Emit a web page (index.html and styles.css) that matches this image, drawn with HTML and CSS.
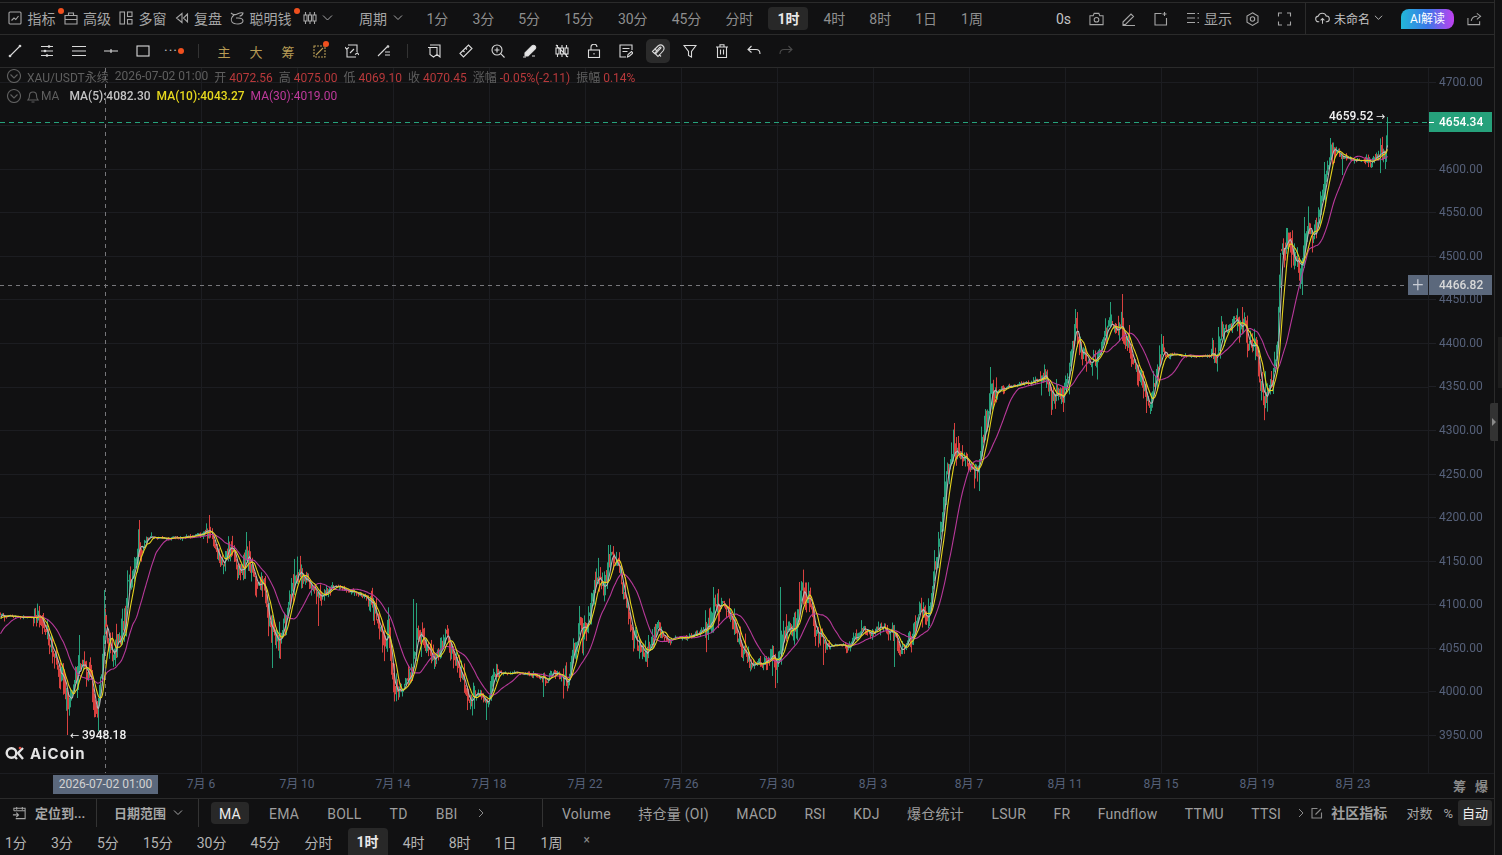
FILE: index.html
```html
<!DOCTYPE html>
<html lang="zh-CN">
<head>
    <meta charset="UTF-8">
    <meta name="viewport" content="width=device-width, initial-scale=1.0">
    <title>XAU/USDT永续 - AiCoin</title>
    <link rel="stylesheet" href="styles.css">
</head>
<body>
<div class="app">
    <header class="topbar">
        <div class="tool"><svg class="ic" viewBox="0 0 14 14"><rect x="1" y="1" width="12" height="12" rx="1"/><path d="M3.500 9.500 6 7l1.800 1.500L10.500 5"/></svg>指标<i class="dot dot-a"></i></div>
        <div class="tool"><svg class="ic" viewBox="0 0 14 14"><path d="M1 4.500h12v8.500H1zM1 8.500h12M4.500 4.500V2h5v2.500"/></svg>高级</div>
        <div class="tool"><svg class="ic" viewBox="0 0 14 14"><rect x="1" y="1" width="4.500" height="12"/><rect x="8.500" y="1" width="4.500" height="4.500"/><rect x="8.500" y="8.500" width="4.500" height="4.500"/></svg>多窗</div>
        <div class="tool"><svg class="ic" viewBox="0 0 14 14"><path d="M7 2.500 1.500 7 7 11.500zM12.500 3 8.500 7l4 4z"/></svg>复盘</div>
        <div class="tool tool-wide"><svg class="ic" viewBox="0 0 14 14"><path d="M1 2c1.500 1.500 3 2 5 1.500S10 1 13 2c-.5 2-2 3-3.500 3M4 4C1.500 6 .5 9 2 11s4 2 6 2 5-1 5-3-2.500-3-5-3H6"/></svg>聪明钱<i class="dot dot-b"></i></div>
        <div class="tool tool-candle"><svg class="ic" viewBox="0 0 14 14"><path d="M2.500 1v3M2.500 10v3M7 1v3M7 10v3M11.500 1v3M11.500 10v3"/><rect x="1" y="4" width="3" height="6"/><rect x="5.500" y="4" width="3" height="6"/><rect x="10" y="4" width="3" height="6"/></svg><svg class="chev chev-wide" viewBox="0 0 10 6"><path d="M.5.500 5 5 9.500.500"/></svg></div>
        <div class="tool tool-cycle">周期<svg class="chev" viewBox="0 0 10 6"><path d="M1 .5 5 4.500 9 .5"/></svg></div>
        <nav class="periods">
            <a>1分</a><a>3分</a><a>5分</a><a>15分</a><a>30分</a><a>45分</a><a>分时</a><a class="on">1时</a><a>4时</a><a>8时</a><a>1日</a><a>1周</a>
        </nav>
        <div class="top-right">
            <span class="countdown">0s</span>
            <svg class="ic ic-right" viewBox="0 0 16 14"><path d="M1 3.500h3.500l1-2.500h5l1 2.500H15V13H1z"/><circle cx="8" cy="7.800" r="2.500"/></svg>
            <svg class="ic ic-right" viewBox="0 0 14 14"><path d="M1.500 10 9.500 2l2.500 2.500-8 8H1.500zM1 13.500h12.500"/></svg>
            <svg class="ic ic-right" viewBox="0 0 14 14"><path d="M8 1.500H1.500V13H13V6M11 0v4M9 2h4"/></svg>
            <div class="tool tool-show"><svg class="ic" viewBox="0 0 14 14"><path d="M1 2.500h8M1 7h8M1 11.500h8M11.500 2.500h1.500M11.500 7h1.500M11.500 11.500h1.500"/></svg>显示</div>
            <svg class="ic ic-right" viewBox="0 0 14 14"><path d="M7 .8 12.500 4v6.200L7 13.400 1.500 10.200V4z"/><circle cx="7" cy="7" r="2.200"/></svg>
            <svg class="ic ic-right ic-full" viewBox="0 0 14 14"><path d="M1 4.500V1h3.500M9.500 1H13v3.500M13 9.500V13H9.500M4.500 13H1V9.500"/></svg>
            <i class="vline"></i>
            <div class="tool tool-name"><svg class="ic" viewBox="0 0 16 14"><path d="M4.500 11H4A3 3 0 0 1 3.500 5 4.500 4.500 0 0 1 12 5a3 3 0 0 1 .500 6H11.500M8 13V7.500M6 9.500l2-2 2 2"/></svg>未命名<svg class="chev" viewBox="0 0 10 6"><path d="M1 .5 5 4.500 9 .5"/></svg></div>
            <span class="ai-btn">AI解读</span>
            <svg class="ic ic-share" viewBox="0 0 16 14"><path d="M1 6v7h12.500V9.500M4.500 9c.5-3.500 3.500-5 6.500-5M10.500 1 14.500 4l-4 3.500"/></svg>
        </div>
    </header>

    <section class="toolbar">
        <span class="btn"><svg class="ic" viewBox="0 0 14 14"><path d="M2 12 12 2"/><circle cx="2" cy="12" r=".8"/><circle cx="12" cy="2" r=".8"/></svg></span>
        <span class="btn"><svg class="ic" viewBox="0 0 14 14"><path d="M1 2.500h12M1 7h12M1 11.500h12"/><circle cx="9" cy="2.500" r=".8"/><circle cx="5" cy="7" r=".8"/><circle cx="7" cy="11.500" r=".8"/></svg></span>
        <span class="btn"><svg class="ic" viewBox="0 0 14 14"><path d="M0 2.500h14M0 7h14M0 11.500h14"/></svg></span>
        <span class="btn"><svg class="ic" viewBox="0 0 14 14"><path d="M0 7h14M7 5v4"/></svg></span>
        <span class="btn"><svg class="ic" viewBox="0 0 14 14"><rect x="1" y="2" width="12" height="10"/></svg></span>
        <span class="btn more">···<i class="dot dot-more"></i></span>
        <i class="sep"></i>
        <span class="btn gold">主</span>
        <span class="btn gold">大</span>
        <span class="btn gold">筹</span>
        <span class="btn"><svg class="ic ic-gold" viewBox="0 0 14 14"><rect x="1" y="2" width="11" height="11" stroke-dasharray="2 1"/><path d="M3 11 10 4"/></svg><i class="dot dot-tool"></i></span>
        <span class="btn"><svg class="ic" viewBox="0 0 14 14"><path d="M3 1h9v7M11 13H2V5M4 3.500 1.500 5 0 3M10 10.500 12.500 9 14 11M5 9l4-4"/></svg></span>
        <span class="btn"><svg class="ic" viewBox="0 0 14 14"><path d="M1 12 10 3M8 8h5M8 11h5"/><circle cx="11" cy="2.500" r=".8"/></svg></span>
        <i class="sep sep-b"></i>
        <span class="btn"><svg class="ic" viewBox="0 0 14 14"><path d="M3 1h10v12l-3-2.500V3.500H1M3 3.500H10v7L6.500 13 3 10.500z"/></svg></span>
        <span class="btn"><svg class="ic" viewBox="0 0 14 14"><path d="M1 9.500 9.500 1 13 4.500 4.500 13zM4 6.500l1.500 1.500M6.500 4 8 5.500"/></svg></span>
        <span class="btn"><svg class="ic" viewBox="0 0 14 14"><circle cx="6" cy="6" r="5"/><path d="M9.700 9.700 13.500 13.500M6 3.500v5M3.500 6h5"/></svg></span>
        <span class="btn"><svg class="ic ic-solid" viewBox="0 0 14 14"><path d="M2 9 9 2c1-1 2-1 3 0s1 2 0 3L5 12H2z"/><path d="M0 13h3M9 12h3"/></svg></span>
        <span class="btn"><svg class="ic" viewBox="0 0 14 14"><path d="M2.500 1v3M2.500 10v3M7 1v3M7 10v3M11.500 1v3M11.500 10v3M1 1l12 12"/><rect x="1" y="4" width="3" height="6"/><rect x="5.500" y="4" width="3" height="6"/><rect x="10" y="4" width="3" height="6"/></svg></span>
        <span class="btn"><svg class="ic" viewBox="0 0 14 14"><rect x="1.500" y="6" width="11" height="7.500"/><path d="M4 6V3.500a3 3 0 0 1 6-.5M7 9v1.500"/></svg></span>
        <span class="btn"><svg class="ic" viewBox="0 0 14 14"><path d="M13 6V1H1v12h6M3.500 4.500h7M3.500 7.500h5M8.500 13l.5-2.500 3.500-3 1.500 1.500-3.500 3z"/></svg></span>
        <span class="btn btn-on"><svg class="ic" viewBox="0 0 14 14"><path d="M1.500 7.500 7 2c2-1.500 4-1 5 0s1.500 3 0 5l-5 5.500-2.500-2.500 5-5.500c1-1 0-2-1-1L3.500 9.500zM3.500 4.500 6 7M8 10.500 10 12.500"/></svg></span>
        <span class="btn"><svg class="ic" viewBox="0 0 14 14"><path d="M1 1.500h12L8.500 7.500V13L5.500 11.500v-4z"/></svg></span>
        <span class="btn"><svg class="ic" viewBox="0 0 14 14"><path d="M2.500 3h9v10.500h-9zM1 3h12M5 3V.8h4V3M5.500 5.500v5M8.500 5.500v5"/></svg></span>
        <span class="btn"><svg class="ic" viewBox="0 0 14 14"><path d="M1 5.500h8c2.500 0 4 1.500 4 4.500M4.500 2 1 5.500 4.500 8.500"/></svg></span>
        <span class="btn btn-off"><svg class="ic" viewBox="0 0 14 14"><path d="M13 5.500H5c-2.500 0-4 1.500-4 4.500M9.500 2 13 5.500 9.500 8.500"/></svg></span>
    </section>

    <main class="chart">
        <div class="chart-row">
            <div class="pane">
                <canvas id="kline" width="1428" height="705"></canvas>
                <div class="info">
                    <div class="info-row">
                        <svg class="ic ic-eye" viewBox="0 0 14 14"><circle cx="7" cy="7" r="6.500"/><path d="M3.500 5.500 7 9l3.500-3.500"/></svg>
                        <span class="pair">XAU/USDT永续</span><span>2026-07-02 01:00</span>
                        <span>开 <b>4072.56</b></span><span>高 <b>4075.00</b></span><span>低 <b>4069.10</b></span><span>收 <b>4070.45</b></span>
                        <span>涨幅 <b>-0.05%(-2.11)</b></span><span>振幅 <b>0.14%</b></span>
                    </div>
                    <div class="info-row">
                        <svg class="ic ic-eye" viewBox="0 0 14 14"><circle cx="7" cy="7" r="6.500"/><path d="M3.500 5.500 7 9l3.500-3.500"/></svg>
                        <svg class="ic ic-bell" viewBox="0 0 12 13"><path d="M1 10c1-1 1.500-2 1.500-4.500a3.500 3.500 0 0 1 7 0C9.500 8 10 9 11 10zM4.500 12h3"/></svg>
                        <span class="ma-name">MA</span>
                        <span class="ma5">MA(5):4082.30</span><span class="ma10">MA(10):4043.27</span><span class="ma30">MA(30):4019.00</span>
                    </div>
                </div>
                <span class="mark mark-high">4659.52 <i class="arr">→</i></span>
                <span class="mark mark-low"><i class="arr">←</i> 3948.18</span>
                <div class="watermark">
                    <svg viewBox="0 0 20 16"><circle cx="6.500" cy="7" r="4.800"/><path d="M10 11l2 2M18 2l-5 5 5 6"/><circle class="logo-dot" cx="15" cy="2" r="1.300"/></svg>
                    <span>AiCoin</span>
                </div>
                <span class="cross-add">+</span>
            </div>
            <div class="price-axis">
                <span>4700.00</span><span>4650.00</span><span>4600.00</span><span>4550.00</span><span>4500.00</span>
                <span>4450.00</span><span>4400.00</span><span>4350.00</span><span>4300.00</span><span>4250.00</span>
                <span>4200.00</span><span>4150.00</span><span>4100.00</span><span>4050.00</span><span>4000.00</span><span>3950.00</span>
                <em class="tag tag-last">4654.34</em>
                <em class="tag tag-cross">4466.82</em>
            </div>
        </div>
        <div class="time-axis">
            <span>7月 6</span><span>7月 10</span><span>7月 14</span><span>7月 18</span><span>7月 22</span><span>7月 26</span><span>7月 30</span>
            <span>8月 3</span><span>8月 7</span><span>8月 11</span><span>8月 15</span><span>8月 19</span><span>8月 23</span>
            <div class="axis-btns"><b>筹</b><b>爆</b></div>
            <em class="time-tag">2026-07-02 01:00</em>
        </div>
    </main>

    <section class="indicators">
        <div class="ind-goto"><svg class="ic" viewBox="0 0 16 14"><path d="M2 4.500V2h12v11H4M5 .5v3M11 .5v3M2 4.500h12M1 9h6M4.500 6.500 7 9l-2.500 2.500"/></svg><b>定位到...</b></div>
        <div class="ind-range"><b>日期范围</b><svg class="chev" viewBox="0 0 10 6"><path d="M1 .5 5 4.500 9 .5"/></svg></div>
        <div class="ind-main">
            <a class="on">MA</a><a>EMA</a><a>BOLL</a><a>TD</a><a>BBI</a>
            <svg class="arrow" viewBox="0 0 6 10"><path d="M1 1l4 4-4 4"/></svg>
        </div>
        <div class="ind-sub">
            <a>Volume</a><a>持仓量 (OI)</a><a>MACD</a><a>RSI</a><a>KDJ</a><a>爆仓统计</a><a>LSUR</a><a>FR</a><a>Fundflow</a><a>TTMU</a><a>TTSI</a>
            <svg class="arrow" viewBox="0 0 6 10"><path d="M1 1l4 4-4 4"/></svg>
            <svg class="ic ic-edit" viewBox="0 0 12 12"><path d="M6.500 1.500H1V11h9.500V5.500M4.500 7.500 10 2"/></svg>
            <b class="community">社区指标</b>
            <div class="ind-right"><span>对数</span><span>%</span><span class="on">自动</span></div>
        </div>
    </section>

    <footer class="bottom-periods">
        <a>1分</a><a>3分</a><a>5分</a><a>15分</a><a>30分</a><a>45分</a><a>分时</a><a class="on">1时</a><a>4时</a><a>8时</a><a>1日</a><a>1周</a><span class="close">×</span>
    </footer>
</div>
<i class="side-strip"></i>
<i class="side-handle"></i>
<script src="chart.js"></script>
</body>
</html>
```

FILE: styles.css
```css
* {
    margin: 0;
    padding: 0;
    box-sizing: border-box;
}

html, body {
    height: 100%;
    overflow: hidden;
    background-color: #111112;
}

body {
    font-family: Roboto, "Noto Sans CJK SC", sans-serif;
    font-size: 14px;
    color: #a6a6a6;
}

a {
    color: inherit;
    text-decoration: none;
}

i, em {
    font-style: normal;
}

.app {
    display: flex;
    flex-direction: column;
    width: 1495px;
    height: 855px;
    border-right: 1px solid #2b2b2b;
}

/* icons */
.ic {
    width: 14px;
    height: 14px;
    flex-shrink: 0;
    fill: none;
    stroke: currentColor;
    stroke-width: 1.1;
}

.ic-solid {
    fill: #e6e6e6;
}

.ic-gold {
    color: #b79c55;
}

.chev {
    width: 10px;
    height: 6px;
    fill: none;
    stroke: currentColor;
    stroke-width: 1;
    flex-shrink: 0;
}

.dot {
    position: absolute;
    width: 6px;
    height: 6px;
    border-radius: 50%;
    background-color: #f0501e;
}

/* top bar */
.topbar {
    display: flex;
    align-items: center;
    height: 33px;
    margin-top: 2px;
    padding-left: 8px;
    border-top: 1px solid #2b2b2b;
    border-bottom: 1px solid #2b2b2b;
    flex-shrink: 0;
}

.tool {
    position: relative;
    display: flex;
    align-items: center;
    gap: 5.500px;
    margin-right: 8px;
    padding-bottom: 1px;
    white-space: nowrap;
}

.dot-a {
    top: 0;
    right: -8px;
}

.dot-b {
    top: 0;
    right: -8px;
}

.tool-wide {
    margin-right: 11px;
}

.tool-candle {
    margin-right: 26px;
}

.chev-wide {
    width: 11px;
}

.tool-cycle {
    margin-right: 15px;
}

.periods {
    display: flex;
    gap: 6px;
}

.periods a,
.bottom-periods a {
    padding: 3px 9px;
    height: 23px;
    line-height: 17px;
    border-radius: 4px;
    white-space: nowrap;
}

.periods a {
    padding-top: 4px;
    color: #8f8f8f;
}

.periods a.on,
.bottom-periods a.on {
    background-color: #282828;
    color: #e8e8e8;
    font-weight: 700;
}

.top-right {
    display: flex;
    align-items: center;
    margin-left: auto;
    height: 100%;
}

.countdown {
    margin-right: 18px;
    color: #c4c4c4;
}

.ic-right {
    width: 15px;
    margin-right: 17px;
}

.ic-full {
    margin-right: 13px;
}

.tool-show {
    gap: 4px;
    margin-right: 13px;
    margin-left: 1px;
}

.vline {
    width: 1px;
    height: 31px;
    background-color: #2b2b2b;
    margin-right: 9px;
}

.tool-name {
    gap: 4px;
    margin-right: 18px;
    color: #c4c4c4;
    font-size: 12px;
}

.tool-name .ic {
    width: 15px;
}

.tool-name .chev {
    width: 9px;
}

.ai-btn {
    width: 53px;
    height: 20px;
    line-height: 20px;
    text-align: center;
    font-size: 12px;
    color: #fff;
    background: linear-gradient(to right, #22b8d8, #3a78e8, #c040f0);
    border-radius: 8px 8px 8px 0;
    margin-right: 13px;
}

.ic-share {
    width: 15px;
    margin-right: 12px;
}

/* drawing toolbar */
.toolbar {
    display: flex;
    align-items: center;
    height: 33px;
    margin-left: -1px;
    border-bottom: 1px solid #2b2b2b;
    flex-shrink: 0;
    color: #dadada;
}

.btn {
    position: relative;
    display: flex;
    align-items: center;
    justify-content: center;
    width: 32px;
    height: 24px;
    border-radius: 5px;
}

.btn-on {
    width: 24px;
    margin: 0 4px;
    background-color: #2b2b2b;
}

.btn-off {
    color: #4a4a4a;
}

.gold {
    color: #b79c55;
    font-size: 13px;
}

.more {
    letter-spacing: 1px;
    padding-right: 8px;
    color: #bcbcbc;
}

.dot-more {
    top: 9px;
    right: 7px;
}

.dot-tool {
    top: 2px;
    right: 7px;
}

.sep {
    width: 1px;
    height: 14px;
    margin: 0 9px 0 7px;
    background-color: #333;
}

.sep-b {
    margin-right: 10px;
}

/* chart */
.chart {
    flex: 1;
    display: flex;
    flex-direction: column;
    min-height: 0;
}

.chart-row {
    display: flex;
    height: 706px;
    border-bottom: 1px solid #1c1d21;
}

.pane {
    position: relative;
    width: 1428px;
    flex-shrink: 0;
}

#kline {
    display: block;
}

.price-axis {
    position: relative;
    flex: 1;
    display: flex;
    flex-direction: column;
    padding-top: 6.500px;
    border-left: 1px solid #1c1d21;
    color: #56617a;
    font-size: 12px;
    overflow: hidden;
}

.price-axis span {
    position: relative;
    display: block;
    height: 43.575px;
    flex-shrink: 0;
    line-height: 14px;
    padding-left: 10px;
}

.price-axis span::before {
    content: "";
    position: absolute;
    left: 0;
    top: 7px;
    width: 7px;
    height: 1px;
    background-color: #1f2025;
}

.tag {
    position: absolute;
    height: 20px;
    line-height: 20px;
    font-size: 12px;
}

.tag-last {
    left: -1px;
    width: 64px;
    padding-left: 11px;
    top: 44px;
    background-color: #26a17b;
    color: #fff;
    font-weight: 500;
}

.tag-last::before {
    content: "";
    position: absolute;
    left: 0;
    top: 10px;
    width: 6px;
    height: 1px;
    background-color: #fff;
}

.tag-cross {
    left: 0;
    width: 63px;
    padding-left: 10px;
    top: 207px;
    background-color: #5b687c;
    color: #d8d8d8;
    font-weight: 500;
}

.cross-add {
    position: absolute;
    right: 0;
    top: 207px;
    width: 20px;
    height: 20px;
    line-height: 19px;
    text-align: center;
    font-size: 20px;
    font-weight: 300;
    background-color: #5b687c;
    color: #c8ccd4;
}

.info {
    position: absolute;
    left: 7px;
    top: -1px;
    font-size: 12px;
    color: #5f5f5f;
}

.info-row {
    display: flex;
    align-items: center;
    gap: 6px;
    height: 18px;
    white-space: nowrap;
}

.info-row + .info-row {
    margin-top: 2px;
}

.info-row b {
    font-weight: 400;
    color: #b8393b;
}

.ic-eye {
    color: #5f5f5f;
}

.ic-bell {
    width: 12px;
    height: 13px;
    margin-right: -4px;
    color: #5f5f5f;
}

.ma-name {
    margin-right: 4px;
}

.ma5 {
    color: #c4c4c4;
    font-weight: 500;
}

.ma10 {
    color: #e6d81e;
    font-weight: 500;
}

.ma30 {
    color: #bf3a9c;
}

.mark {
    position: absolute;
    font-size: 12px;
    font-weight: 500;
    color: #f2f2f2;
    white-space: nowrap;
}

.arr {
    font-size: 9px;
}

.mark-high {
    top: 41px;
    left: 1329px;
}

.mark-low {
    top: 660px;
    left: 70px;
}

.watermark {
    position: absolute;
    left: 5px;
    top: 676px;
    display: flex;
    align-items: center;
    gap: 5px;
    font-family: Inter, sans-serif;
    font-weight: 700;
    font-size: 15px;
    letter-spacing: 1.100px;
    color: #e4e4e4;
}

.watermark svg {
    width: 20px;
    height: 16px;
    fill: none;
    stroke: #e4e4e4;
    stroke-width: 2.400;
}

.watermark .logo-dot {
    fill: #e0483c;
    stroke: none;
}

.time-axis {
    position: relative;
    display: flex;
    align-items: center;
    height: 25px;
    padding-left: 153px;
    padding-bottom: 8px;
    font-size: 12px;
    color: #56617a;
    flex-shrink: 0;
}

.time-axis span {
    width: 96px;
    text-align: center;
    flex-shrink: 0;
}

.axis-btns {
    display: flex;
    gap: 9px;
    margin-top: 6px;
    margin-left: 52px;
    font-size: 13px;
    color: #8a8a8a;
}

.time-tag {
    position: absolute;
    left: 53px;
    top: 1px;
    width: 105px;
    height: 19px;
    line-height: 19px;
    text-align: center;
    background-color: #5b687c;
    color: #d2d2d2;
}

/* indicator bar */
.indicators {
    display: flex;
    height: 30px;
    border-top: 1px solid #2b2b2b;
    flex-shrink: 0;
    line-height: 1;
}

.indicators b {
    font-weight: 700;
}

.ind-goto,
.ind-range,
.ind-main,
.ind-sub {
    display: flex;
    align-items: center;
    height: 28px;
    flex-shrink: 0;
    border-right: 1px solid #333;
    white-space: nowrap;
}

.ind-goto {
    width: 97px;
    gap: 8px;
    padding-left: 12px;
    font-size: 13px;
}

.ind-goto .ic {
    width: 15px;
}

.ind-range {
    width: 102px;
    gap: 7px;
    padding-left: 17px;
    font-size: 13px;
}

.ind-main {
    width: 344px;
    gap: 12px;
    padding-left: 12px;
}

.ind-main a,
.ind-sub a {
    padding: 5px 8px 3px;
    border-radius: 4px;
    color: #9e9e9e;
    letter-spacing: .25px;
}

.ind-main a.on {
    background-color: #282828;
    color: #ececec;
}

.arrow {
    width: 6px;
    height: 10px;
    fill: none;
    stroke: #8a8a8a;
}

.ind-sub {
    flex: 1 1 0;
    min-width: 0;
    gap: 11.400px;
    padding-left: 11px;
    border-right: none;
}

.ind-sub .arrow {
    margin-left: -3px;
    margin-right: -4px;
}

.ic-edit {
    width: 12px;
    height: 12px;
    color: #8a8a8a;
    margin-right: -3px;
}

.community {
    color: #9e9e9e;
}

.ind-right {
    display: flex;
    align-items: center;
    gap: 11px;
    margin-left: auto;
    margin-right: 2px;
    font-size: 13px;
}

.ind-right .on {
    padding: 7px 4px 6px;
    margin-left: -6px;
    background-color: #282828;
    color: #ececec;
    border-radius: 3px;
}

/* bottom periods */
.bottom-periods {
    display: flex;
    align-items: flex-end;
    gap: 6.100px;
    margin-left: -4px;
    height: 27px;
    color: #b4b4b4;
}

.bottom-periods a.on {
    height: 27px;
    line-height: 23px;
    border-radius: 4px 4px 0 0;
}

.close {
    margin-left: 6px;
    height: 23px;
    line-height: 17px;
    font-size: 12px;
    color: #8a8a8a;
}

.side-strip {
    position: absolute;
    left: 1498px;
    top: 337px;
    width: 4px;
    height: 51px;
    background-color: #1d1d1d;
}

.side-handle {
    position: absolute;
    left: 1490px;
    top: 403px;
    width: 8px;
    height: 38px;
    background-color: #333;
    border-radius: 2px 0 0 2px;
}

.side-handle::after {
    content: "";
    position: absolute;
    left: 2px;
    top: 15px;
    border-left: 4px solid #8a8a8a;
    border-top: 4px solid transparent;
    border-bottom: 4px solid transparent;
}
```

FILE: chart.js
```js
// price path read off the picture, as [x, y] in page pixels (1 candle = 1px)
var PATH = [
    [-60, 690], [-30, 665], [-15, 628], [0, 615], [38, 618], [50, 643], [62, 673], [68, 707], [75, 677], [83, 663], [88, 673],
    [97, 710], [102, 667], [104, 613], [107, 633], [112, 657], [117, 640], [125, 630], [127, 587], [133, 583],
    [138, 543], [147, 538], [167, 538], [187, 537], [208, 533], [213, 543], [220, 563], [230, 548], [240, 578],
    [248, 557], [257, 590], [263, 580], [270, 633], [277, 640], [283, 627], [290, 600], [298, 575], [307, 580],
    [320, 600], [328, 588], [340, 587], [353, 592], [373, 600], [382, 640], [388, 635], [393, 690], [402, 688],
    [412, 670], [417, 627], [423, 637], [433, 663], [445, 633], [457, 663], [470, 703], [480, 693], [487, 697],
    [495, 675], [513, 673], [533, 675], [547, 680], [555, 672], [568, 680], [577, 630], [587, 627], [597, 577],
    [603, 590], [610, 560], [620, 580], [628, 610], [633, 645], [643, 647], [647, 662], [657, 630], [667, 638],
    [687, 637], [710, 628], [715, 603], [723, 605], [733, 620], [742, 647], [750, 663], [763, 665], [770, 657],
    [777, 670], [783, 627], [793, 637], [802, 593], [808, 593], [817, 633], [825, 645], [850, 645], [863, 630],
    [873, 632], [880, 625], [892, 633], [900, 648], [913, 635], [920, 610], [928, 617], [935, 567], [942, 513],
    [947, 470], [955, 443], [960, 453], [970, 467], [977, 477], [983, 440], [992, 393], [1000, 388], [1027, 383],
    [1045, 377], [1053, 400], [1065, 387], [1075, 325], [1082, 358], [1095, 363], [1103, 340], [1112, 322],
    [1122, 330], [1130, 353], [1140, 377], [1150, 405], [1160, 357], [1170, 355], [1190, 356], [1216, 356],
    [1220, 340], [1233, 323], [1242, 322], [1247, 343], [1255, 347], [1263, 397], [1272, 383], [1277, 343],
    [1280, 257], [1287, 233], [1293, 260], [1302, 268], [1305, 233], [1315, 233], [1322, 193], [1330, 147],
    [1337, 155], [1353, 160], [1370, 162], [1385, 150], [1387, 125]
];

// long wicks: [x, top, bottom], 0 = leave as it is
var SPIKES = [
    [67, 0, 735], [79, 635, 0], [104, 590, 0], [139, 520, 0], [209, 515, 0], [246, 532, 0], [272, 0, 668], [318, 0, 626],
    [413, 599, 0], [416, 603, 0], [486, 0, 720], [543, 0, 697], [608, 545, 0], [647, 0, 667], [713, 587, 0],
    [775, 0, 688], [780, 587, 0], [799, 582, 0], [823, 0, 665], [894, 0, 667], [944, 457, 0], [954, 423, 0],
    [990, 367, 0], [1051, 0, 415], [1063, 0, 412], [1075, 309, 0], [1110, 302, 0], [1122, 294, 0], [1146, 0, 413],
    [1150, 0, 414], [1218, 327, 0], [1242, 307, 0], [1266, 0, 403], [1280, 253, 0], [1287, 228, 0], [1302, 0, 295],
    [1304, 217, 0], [1324, 162, 0], [1330, 138, 0], [1342, 0, 175], [1385, 0, 169], [1387, 117, 0]
];

var TOP = 68;
var START = -60;
var LAST = 1387;

var seed = 20260702;
function rand() {
    seed = (seed + 0x6D2B79F5) | 0;
    var t = Math.imul(seed ^ (seed >>> 15), 1 | seed);
    t = (t + Math.imul(t ^ (t >>> 7), 61 | t)) ^ t;
    return ((t ^ (t >>> 14)) >>> 0) / 4294967296;
}

function pathY(x) {
    for (var i = 1; i < PATH.length; i++) {
        if (x <= PATH[i][0]) {
            var a = PATH[i - 1], b = PATH[i];
            return a[1] + (b[1] - a[1]) * (x - a[0]) / (b[0] - a[0]);
        }
    }
    return PATH[PATH.length - 1][1];
}

// busy stretches get more noise than the flat ones
function volatility(x) {
    var max = 0;
    for (var d = -5; d <= 5; d++) {
        max = Math.max(max, Math.abs(pathY(x + d + 1) - pathY(x + d)));
    }
    return 0.7 + Math.min(7, max * 1.9);
}

function buildCandles() {
    var list = [];
    var noise = 0;
    var prev = pathY(START);
    for (var x = START; x <= LAST; x++) {
        var vol = volatility(x);
        noise = noise * 0.45 + (rand() * 2 - 1) * vol;
        var close = pathY(x) + noise;
        var high = Math.min(prev, close) - rand() * rand() * vol * 3;
        var low = Math.max(prev, close) + rand() * rand() * vol * 3;
        list.push({ x: x, open: prev, close: close, high: high, low: low });
        prev = close;
    }
    SPIKES.forEach(function (s) {
        var c = list[s[0] - START];
        if (s[1]) c.high = s[1];
        if (s[2]) c.low = s[2];
    });
    return list;
}

function drawGrid(ctx) {
    ctx.fillStyle = '#1c1d21';
    for (var i = 0; i < 16; i++) {
        ctx.fillRect(0, Math.round(81.5 + 43.575 * i - TOP), 1428, 1);
    }
    for (var x = 201; x < 1428; x += 96) {
        ctx.fillRect(x, 0, 1, 705);
    }
}

function drawMA(ctx, candles, period, color) {
    ctx.strokeStyle = color;
    ctx.lineWidth = 1.1;
    ctx.beginPath();
    var sum = 0;
    for (var i = 0; i < candles.length; i++) {
        sum += candles[i].close;
        if (i >= period) sum -= candles[i - period].close;
        if (candles[i].x >= 0) {
            ctx.lineTo(candles[i].x + 0.5, sum / period - TOP);
        }
    }
    ctx.stroke();
}

function dashed(ctx, x1, y1, x2, y2, color, dash) {
    ctx.strokeStyle = color;
    ctx.lineWidth = 1;
    ctx.setLineDash(dash);
    ctx.beginPath();
    ctx.moveTo(x1, y1);
    ctx.lineTo(x2, y2);
    ctx.stroke();
    ctx.setLineDash([]);
}

window.onload = function () {
    var ctx = document.getElementById('kline').getContext('2d');
    var candles = buildCandles();

    drawGrid(ctx);

    candles.forEach(function (c) {
        if (c.x < 0) return;
        ctx.fillStyle = c.close <= c.open ? '#26a17b' : '#d8413f';
        ctx.fillRect(c.x, c.high - TOP, 1, c.low - c.high);
    });

    drawMA(ctx, candles, 5, '#b4b4b4');
    drawMA(ctx, candles, 30, '#b8399a');
    drawMA(ctx, candles, 10, '#e6d41e');

    dashed(ctx, 105.5, 0, 105.5, 705, '#77777b', [4, 4]);
    dashed(ctx, 0, 217.5, 1408, 217.5, '#77777b', [4, 4]);
    dashed(ctx, 0, 54.5, 1428, 54.5, '#26a17b', [5, 4]);
};
```
